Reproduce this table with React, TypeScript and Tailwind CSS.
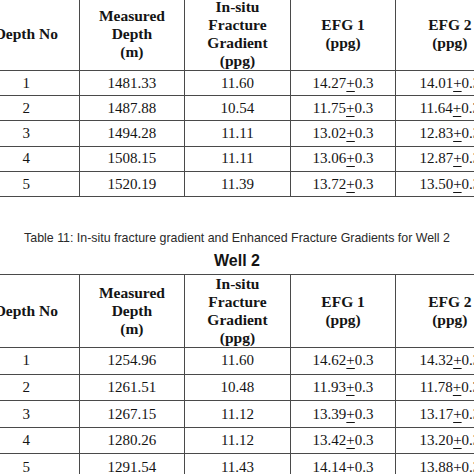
import React from 'react';

type Row = { no: string; depth: string; fg: string; efg1: string; efg2: string };

const well1: Row[] = [
  { no: '1', depth: '1481.33', fg: '11.60', efg1: '14.27', efg2: '14.01' },
  { no: '2', depth: '1487.88', fg: '10.54', efg1: '11.75', efg2: '11.64' },
  { no: '3', depth: '1494.28', fg: '11.11', efg1: '13.02', efg2: '12.83' },
  { no: '4', depth: '1508.15', fg: '11.11', efg1: '13.06', efg2: '12.87' },
  { no: '5', depth: '1520.19', fg: '11.39', efg1: '13.72', efg2: '13.50' },
];

const well2: Row[] = [
  { no: '1', depth: '1254.96', fg: '11.60', efg1: '14.62', efg2: '14.32' },
  { no: '2', depth: '1261.51', fg: '10.48', efg1: '11.93', efg2: '11.78' },
  { no: '3', depth: '1267.15', fg: '11.12', efg1: '13.39', efg2: '13.17' },
  { no: '4', depth: '1280.26', fg: '11.12', efg1: '13.42', efg2: '13.20' },
  { no: '5', depth: '1291.54', fg: '11.43', efg1: '14.14', efg2: '13.88' },
];

const th = 'border border-[#4a4a4a] p-0 text-center align-middle font-bold text-[15.5px] leading-[18px]';
const td = 'border border-[#4a4a4a] p-0 text-center align-middle text-[15px]';

const PlusMinus = ({ v }: { v: string }) => (
  <>
    {v}
    <span className="underline underline-offset-[3px] decoration-1">+</span>0.3
  </>
);

const DataTable = ({ rows, rowH }: { rows: Row[]; rowH: string }) => (
  <table className="table-fixed border-collapse w-[530.4px] ml-[-27px] text-[#141414] font-['Liberation_Serif',serif]">
    <colgroup>
      <col className="w-[105.6px]" />
      <col className="w-[105.6px]" />
      <col className="w-[105.6px]" />
      <col className="w-[105.6px]" />
      <col className="w-[108px]" />
    </colgroup>
    <thead>
      <tr className="h-[72px]">
        <th className={th}>Depth No</th>
        <th className={th}>
          Measured
          <br />
          Depth
          <br />
          (m)
        </th>
        <th className={th}>
          In-situ
          <br />
          Fracture
          <br />
          Gradient
          <br />
          (ppg)
        </th>
        <th className={th}>
          EFG 1
          <br />
          (ppg)
        </th>
        <th className={th}>
          EFG 2
          <br />
          (ppg)
        </th>
      </tr>
    </thead>
    <tbody>
      {rows.map((r) => (
        <tr key={r.no} className={rowH}>
          <td className={td}>{r.no}</td>
          <td className={td}>{r.depth}</td>
          <td className={td}>{r.fg}</td>
          <td className={td}>
            <PlusMinus v={r.efg1} />
          </td>
          <td className={td}>
            <PlusMinus v={r.efg2} />
          </td>
        </tr>
      ))}
    </tbody>
  </table>
);

export default function App() {
  return (
    <div className="w-[474px] h-[474px] overflow-hidden bg-white">
      <div className="mt-[-3px]">
        <DataTable rows={well1} rowH="h-[25.2px]" />
      </div>
      <p className="mt-[34px] text-center text-[12.4px] leading-[14px] text-[#2a2a2a] font-['Liberation_Sans',Arial,sans-serif]">
        Table 11: In-situ fracture gradient and Enhanced Fracture Gradients for Well 2
      </p>
      <p className="mt-[6px] text-center text-[16px] leading-[20px] font-bold text-[#141414] font-['Liberation_Sans',Arial,sans-serif]">
        Well 2
      </p>
      <div className="mt-[3px]">
        <DataTable rows={well2} rowH="h-[26.6px]" />
      </div>
    </div>
  );
}
